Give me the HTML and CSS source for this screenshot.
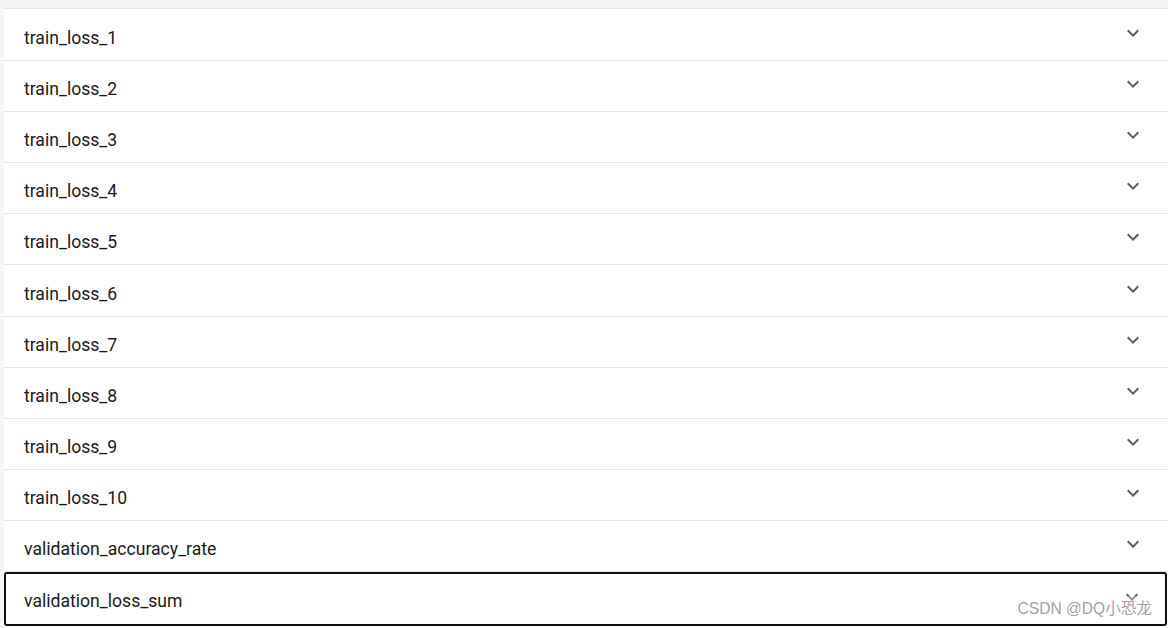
FILE: index.html
```html
<!DOCTYPE html>
<html>
<head>
<meta charset="utf-8">
<link rel="stylesheet" href="styles.css">
</head>
<body>
<div class="page">
  <div class="list">
    <div class="row first"><span class="label">train_loss_1</span><svg class="chev" viewBox="0 0 24 24"><path d="M16.59 8.59L12 13.17 7.41 8.59 6 10l6 6 6-6z"/></svg></div>
    <div class="row"><span class="label">train_loss_2</span><svg class="chev" viewBox="0 0 24 24"><path d="M16.59 8.59L12 13.17 7.41 8.59 6 10l6 6 6-6z"/></svg></div>
    <div class="row"><span class="label">train_loss_3</span><svg class="chev" viewBox="0 0 24 24"><path d="M16.59 8.59L12 13.17 7.41 8.59 6 10l6 6 6-6z"/></svg></div>
    <div class="row"><span class="label">train_loss_4</span><svg class="chev" viewBox="0 0 24 24"><path d="M16.59 8.59L12 13.17 7.41 8.59 6 10l6 6 6-6z"/></svg></div>
    <div class="row"><span class="label">train_loss_5</span><svg class="chev" viewBox="0 0 24 24"><path d="M16.59 8.59L12 13.17 7.41 8.59 6 10l6 6 6-6z"/></svg></div>
    <div class="row"><span class="label">train_loss_6</span><svg class="chev" viewBox="0 0 24 24"><path d="M16.59 8.59L12 13.17 7.41 8.59 6 10l6 6 6-6z"/></svg></div>
    <div class="row"><span class="label">train_loss_7</span><svg class="chev" viewBox="0 0 24 24"><path d="M16.59 8.59L12 13.17 7.41 8.59 6 10l6 6 6-6z"/></svg></div>
    <div class="row"><span class="label">train_loss_8</span><svg class="chev" viewBox="0 0 24 24"><path d="M16.59 8.59L12 13.17 7.41 8.59 6 10l6 6 6-6z"/></svg></div>
    <div class="row"><span class="label">train_loss_9</span><svg class="chev" viewBox="0 0 24 24"><path d="M16.59 8.59L12 13.17 7.41 8.59 6 10l6 6 6-6z"/></svg></div>
    <div class="row"><span class="label">train_loss_10</span><svg class="chev" viewBox="0 0 24 24"><path d="M16.59 8.59L12 13.17 7.41 8.59 6 10l6 6 6-6z"/></svg></div>
    <div class="row"><span class="label">validation_accuracy_rate</span><svg class="chev" viewBox="0 0 24 24"><path d="M16.59 8.59L12 13.17 7.41 8.59 6 10l6 6 6-6z"/></svg></div>
    <div class="row focused"><span class="label">validation_loss_sum</span><svg class="chev" viewBox="0 0 24 24"><path d="M16.59 8.59L12 13.17 7.41 8.59 6 10l6 6 6-6z"/></svg>
      <span class="watermark">CSDN @DQ小恐龙</span>
    </div>
  </div>
</div>
</body>
</html>
```

FILE: styles.css
```css
html, body {
  margin: 0;
  padding: 0;
  background: #f5f5f5;
  overflow: hidden;
}
.page {
  width: 1168px;
  height: 628px;
  padding: 8px 0 0 4px;
  box-sizing: border-box;
  background: #f5f5f5;
}
.list {
  background: #ffffff;
  border-top: 1px solid #e6e6e6;
  height: 620px;
}
.row {
  position: relative;
  display: flex;
  align-items: center;
  justify-content: space-between;
  height: 50.1px;
  border-bottom: 1px solid #e6e6e6;
  padding: 0 23px 0 20px;
  font-family: Roboto, "Noto Sans", sans-serif;
  font-size: 17.6px;
  color: #1a1a1a;
}
.row.first {
  height: 51.1px;
}
.label {
  padding-top: 6px;
}
.chev {
  width: 24px;
  height: 24px;
  fill: #5f5f5f;
  margin-top: -4px;
}
.row.focused {
  height: 50px;
  border: 2px solid #111;
  border-radius: 3px;
  padding: 0 21px 0 18px;
  margin-right: 1px;
}
.row.focused .label {
  padding-top: 3px;
}
.watermark {
  position: absolute;
  right: 13px;
  bottom: 6px;
  font-family: "Liberation Sans", Arial, "Noto Sans CJK SC", sans-serif;
  font-size: 15.6px;
  color: rgba(150, 150, 150, 0.9);
  background: rgba(255, 255, 255, 0.35);
}
```
